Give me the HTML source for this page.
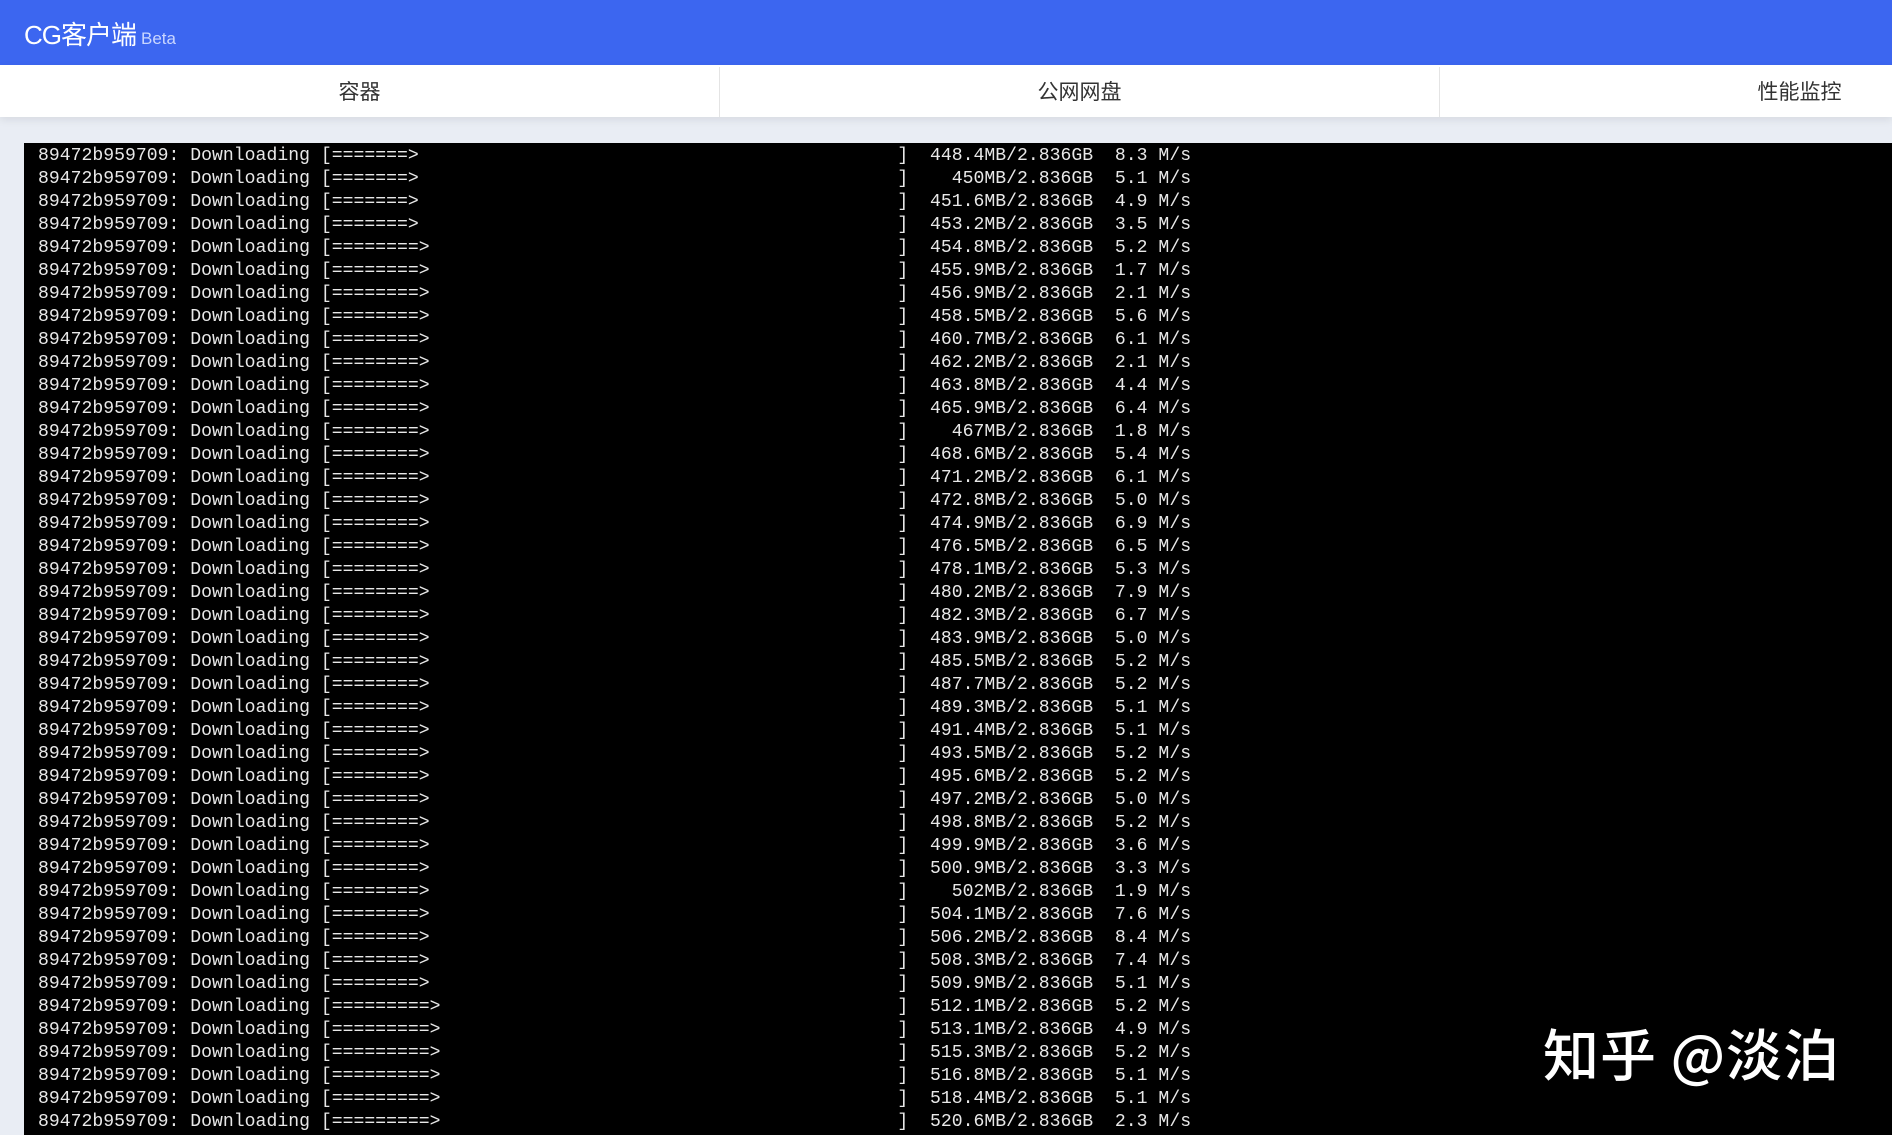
<!DOCTYPE html>
<html><head><meta charset="utf-8"><style>
html,body{margin:0;padding:0;width:1892px;height:1135px;overflow:hidden;background:#e9edf4;}
.hdr{height:65px;background:#3c66f0;color:#fff;font-family:"Liberation Sans","Noto Sans CJK SC",sans-serif;position:relative}
.hdr .t{position:absolute;left:24px;top:15px;font-size:26px;letter-spacing:-1px}
.hdr .b{font-size:17px;color:#c9d6ff;margin-left:5px;letter-spacing:0}
.tabs{height:52px;background:#fff;position:relative;box-shadow:0 3px 8px rgba(0,0,0,0.08);overflow:hidden}
.tab{position:absolute;top:2px;width:720px;height:52px;line-height:52px;text-align:center;font-family:"Liberation Sans","Noto Sans CJK SC",sans-serif;font-size:21px;color:#333;border-right:1px solid #e4e4e4;box-sizing:border-box}
.term{position:absolute;left:24px;top:143px;right:0;bottom:0;background:#000}
pre{margin:0;position:absolute;left:14px;top:2px;font-family:"Liberation Mono",monospace;font-size:18.1px;letter-spacing:0.02px;line-height:23.0px;color:#e8e8e8}
.wm{position:absolute;left:1543px;top:1012px;font-family:"Noto Sans CJK SC",sans-serif;font-size:56px;color:#fff;font-weight:500;letter-spacing:1px}
</style></head><body>
<div class="hdr"><div class="t">CG客户端<span class="b">Beta</span></div></div>
<div class="tabs">
<div class="tab" style="left:0">容器</div>
<div class="tab" style="left:720px">公网网盘</div>
<div class="tab" style="left:1440px">性能监控</div>
</div>
<div class="term"><pre id="p">89472b959709: Downloading [=======>                                            ]  448.4MB/2.836GB  8.3 M/s
89472b959709: Downloading [=======>                                            ]    450MB/2.836GB  5.1 M/s
89472b959709: Downloading [=======>                                            ]  451.6MB/2.836GB  4.9 M/s
89472b959709: Downloading [=======>                                            ]  453.2MB/2.836GB  3.5 M/s
89472b959709: Downloading [========>                                           ]  454.8MB/2.836GB  5.2 M/s
89472b959709: Downloading [========>                                           ]  455.9MB/2.836GB  1.7 M/s
89472b959709: Downloading [========>                                           ]  456.9MB/2.836GB  2.1 M/s
89472b959709: Downloading [========>                                           ]  458.5MB/2.836GB  5.6 M/s
89472b959709: Downloading [========>                                           ]  460.7MB/2.836GB  6.1 M/s
89472b959709: Downloading [========>                                           ]  462.2MB/2.836GB  2.1 M/s
89472b959709: Downloading [========>                                           ]  463.8MB/2.836GB  4.4 M/s
89472b959709: Downloading [========>                                           ]  465.9MB/2.836GB  6.4 M/s
89472b959709: Downloading [========>                                           ]    467MB/2.836GB  1.8 M/s
89472b959709: Downloading [========>                                           ]  468.6MB/2.836GB  5.4 M/s
89472b959709: Downloading [========>                                           ]  471.2MB/2.836GB  6.1 M/s
89472b959709: Downloading [========>                                           ]  472.8MB/2.836GB  5.0 M/s
89472b959709: Downloading [========>                                           ]  474.9MB/2.836GB  6.9 M/s
89472b959709: Downloading [========>                                           ]  476.5MB/2.836GB  6.5 M/s
89472b959709: Downloading [========>                                           ]  478.1MB/2.836GB  5.3 M/s
89472b959709: Downloading [========>                                           ]  480.2MB/2.836GB  7.9 M/s
89472b959709: Downloading [========>                                           ]  482.3MB/2.836GB  6.7 M/s
89472b959709: Downloading [========>                                           ]  483.9MB/2.836GB  5.0 M/s
89472b959709: Downloading [========>                                           ]  485.5MB/2.836GB  5.2 M/s
89472b959709: Downloading [========>                                           ]  487.7MB/2.836GB  5.2 M/s
89472b959709: Downloading [========>                                           ]  489.3MB/2.836GB  5.1 M/s
89472b959709: Downloading [========>                                           ]  491.4MB/2.836GB  5.1 M/s
89472b959709: Downloading [========>                                           ]  493.5MB/2.836GB  5.2 M/s
89472b959709: Downloading [========>                                           ]  495.6MB/2.836GB  5.2 M/s
89472b959709: Downloading [========>                                           ]  497.2MB/2.836GB  5.0 M/s
89472b959709: Downloading [========>                                           ]  498.8MB/2.836GB  5.2 M/s
89472b959709: Downloading [========>                                           ]  499.9MB/2.836GB  3.6 M/s
89472b959709: Downloading [========>                                           ]  500.9MB/2.836GB  3.3 M/s
89472b959709: Downloading [========>                                           ]    502MB/2.836GB  1.9 M/s
89472b959709: Downloading [========>                                           ]  504.1MB/2.836GB  7.6 M/s
89472b959709: Downloading [========>                                           ]  506.2MB/2.836GB  8.4 M/s
89472b959709: Downloading [========>                                           ]  508.3MB/2.836GB  7.4 M/s
89472b959709: Downloading [========>                                           ]  509.9MB/2.836GB  5.1 M/s
89472b959709: Downloading [=========>                                          ]  512.1MB/2.836GB  5.2 M/s
89472b959709: Downloading [=========>                                          ]  513.1MB/2.836GB  4.9 M/s
89472b959709: Downloading [=========>                                          ]  515.3MB/2.836GB  5.2 M/s
89472b959709: Downloading [=========>                                          ]  516.8MB/2.836GB  5.1 M/s
89472b959709: Downloading [=========>                                          ]  518.4MB/2.836GB  5.1 M/s
89472b959709: Downloading [=========>                                          ]  520.6MB/2.836GB  2.3 M/s</pre></div>
<div class="wm">知乎 @淡泊</div>
</body></html>
